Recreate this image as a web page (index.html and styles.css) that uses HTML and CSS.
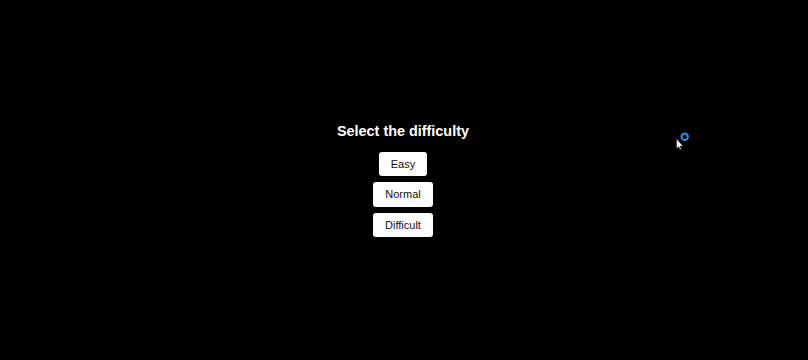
FILE: index.html
```html
<!DOCTYPE html>
<html lang="en">
<head>
<meta charset="utf-8">
<title>Select the difficulty</title>
<link rel="stylesheet" href="styles.css">
</head>
<body>
<main class="screen">
  <h1 class="title">Select the difficulty</h1>
  <div class="choices">
    <button class="choice">Easy</button>
    <button class="choice">Normal</button>
    <button class="choice">Difficult</button>
  </div>
</main>
<svg class="cursor" width="20" height="20" viewBox="0 0 20 20" aria-hidden="true">
  <circle cx="12.7" cy="4.7" r="3.2" fill="none" stroke="#2a8fe0" stroke-width="2"/>
  <path d="M4.3 6.5 L4.3 17 L6.6 14.8 L8 18 L9.5 17.3 L8.2 14.2 L11.3 14.2 Z" fill="#fff" stroke="#000" stroke-width="0.7"/>
</svg>
</body>
</html>
```

FILE: styles.css
```css
html, body {
  margin: 0;
  padding: 0;
  background: #000;
  height: 100%;
}

.screen {
  height: 360px;
  display: flex;
  flex-direction: column;
  align-items: center;
  justify-content: center;
  font-family: "Liberation Sans", Arial, sans-serif;
  padding-right: 2px;
  box-sizing: border-box;
}

.title {
  margin: 0 0 12.5px;
  font-size: 14.4px;
  font-weight: bold;
  color: #fff;
  line-height: 16.5px;
}

.choices {
  display: flex;
  flex-direction: column;
  align-items: center;
  gap: 6px;
}

.choice {
  font-family: "Liberation Sans", Arial, sans-serif;
  font-size: 11px;
  color: #111;
  background: #fff;
  border: none;
  border-radius: 3px;
  height: 24.5px;
  padding: 0 12px;
  line-height: 24.5px;
  cursor: pointer;
}

.cursor {
  position: absolute;
  left: 672px;
  top: 132px;
}
```
